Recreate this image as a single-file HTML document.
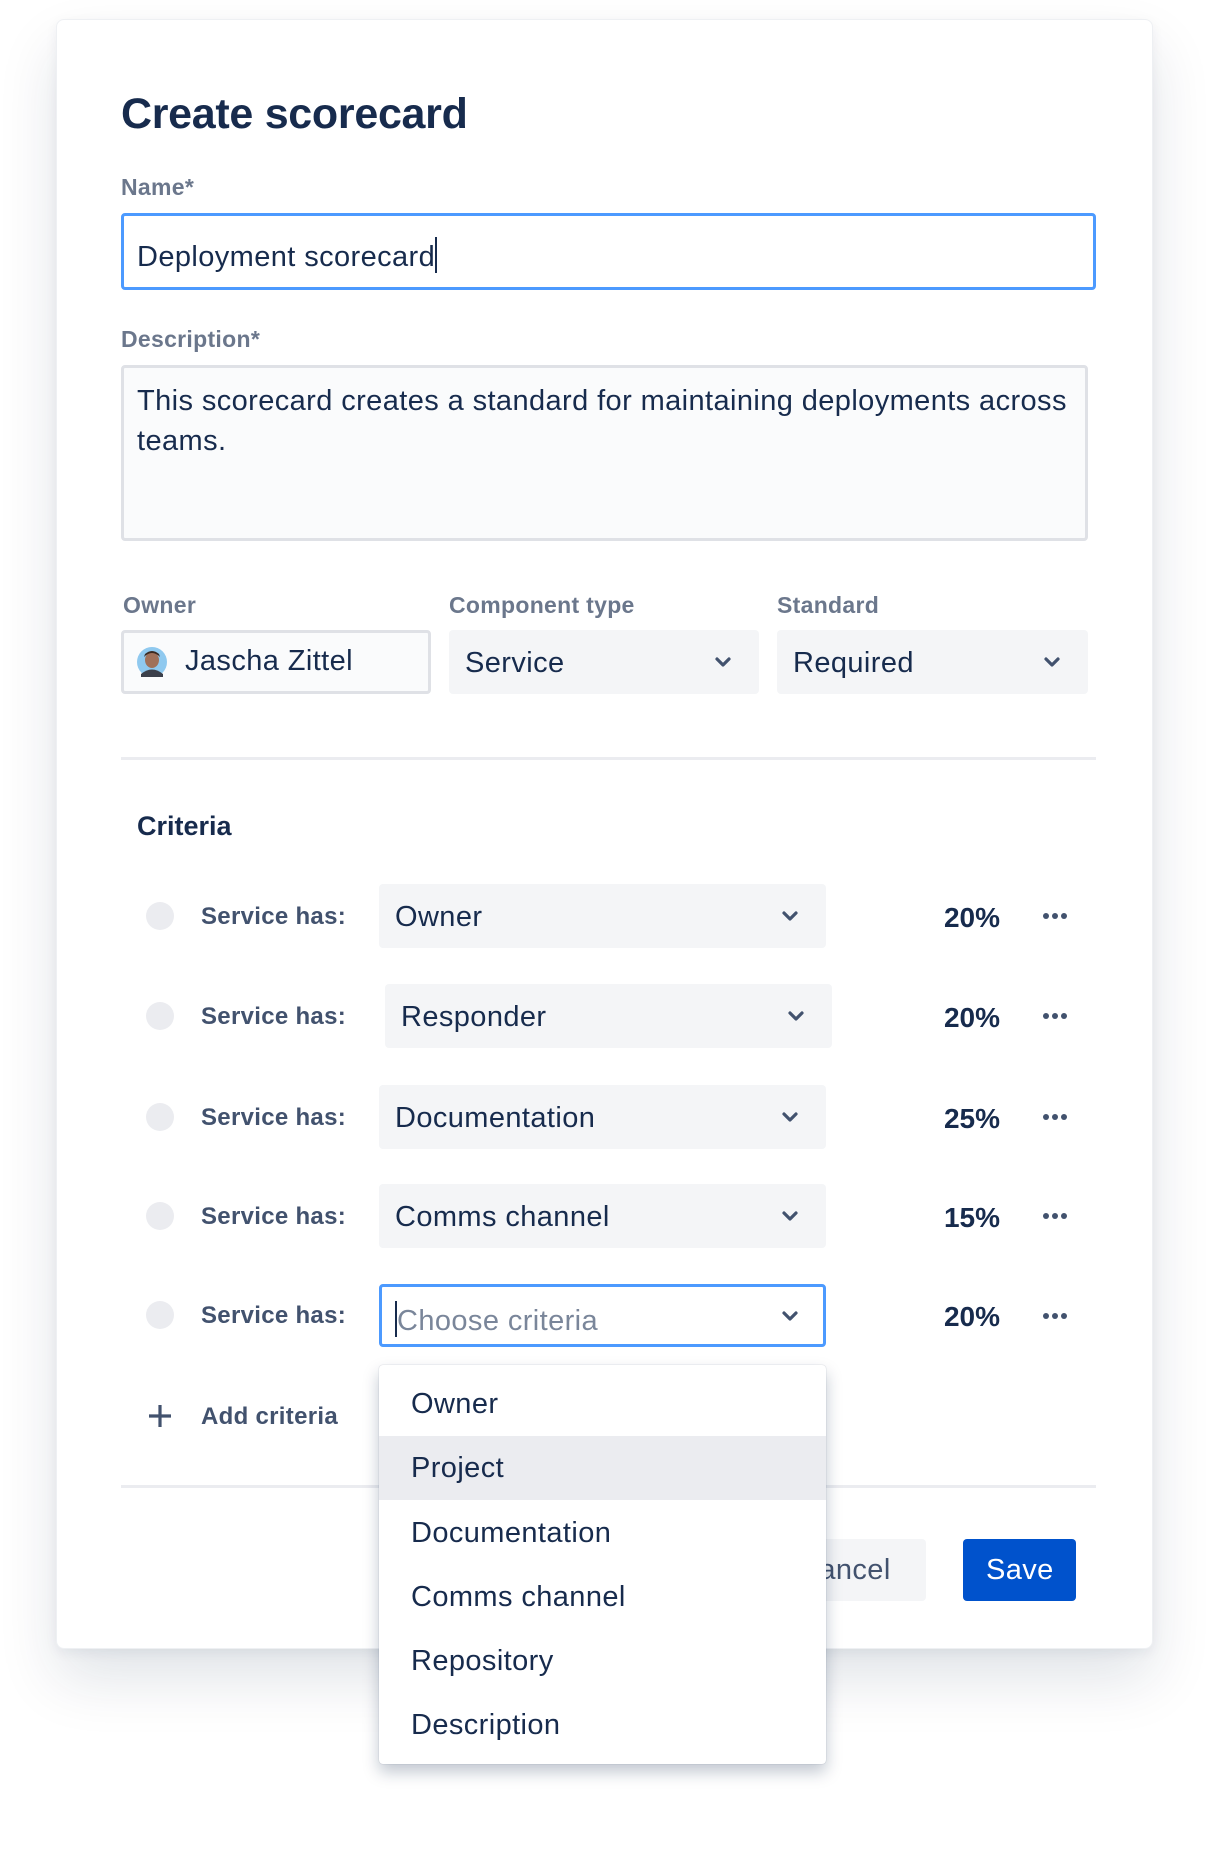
<!DOCTYPE html>
<html><head><meta charset="utf-8"><style>
*{box-sizing:border-box;margin:0;padding:0}
body{width:1208px;height:1856px;background:#fff;font-family:"Liberation Sans",sans-serif;position:relative;overflow:hidden;color:#172b4d}
.a{position:absolute}
.card{left:56px;top:19px;width:1097px;height:1630px;border-radius:8px;background:#fff;border:1px solid #eef0f3;box-shadow:0 30px 60px rgba(9,30,66,0.12),0 4px 12px rgba(9,30,66,0.06)}
.lbl{font-size:23px;color:#6b778c;font-weight:bold;line-height:1;letter-spacing:0.3px}
.fld{font-size:29px;line-height:1;letter-spacing:0.4px}
.sel{background:#f4f5f7;border-radius:4px;height:64px}
.sel span{position:absolute;left:16px;top:17px;font-size:29px;letter-spacing:0.4px}
.chev{position:absolute;right:26px;top:22px}
.sh{font-size:24px;font-weight:bold;color:#42526e;letter-spacing:0.3px}
.dot{width:28px;height:28px;border-radius:50%;background:#ebecf0}
.pct{font-size:28px;font-weight:bold;color:#172b4d;text-align:right;width:84px}
.item{left:0;width:447px;height:64px;font-size:29px;letter-spacing:0.4px;padding:16px 0 0 32px}
</style></head><body>
<div class="a card"></div>
<div class="a" style="left:121px;top:90px;font-size:43px;font-weight:bold;letter-spacing:-0.3px">Create scorecard</div>
<div class="a lbl" style="left:121px;top:176px">Name*</div>
<div class="a" style="left:121px;top:213px;width:975px;height:77px;border:3px solid #4c9aff;border-radius:4px"></div>
<div class="a fld" style="left:137px;top:237px">Deployment scorecard<span style="display:inline-block;width:2px;height:36px;background:#172b4d;vertical-align:-7px"></span></div>
<div class="a lbl" style="left:121px;top:328px">Description*</div>
<div class="a" style="left:121px;top:365px;width:967px;height:176px;border:3px solid #dfe1e6;border-radius:4px;background:#fafbfc"></div>
<div class="a fld" style="left:137px;top:381px;line-height:40px;width:940px">This scorecard creates a standard for maintaining deployments across teams.</div>
<div class="a lbl" style="left:123px;top:594px">Owner</div>
<div class="a lbl" style="left:449px;top:594px">Component type</div>
<div class="a lbl" style="left:777px;top:594px">Standard</div>
<div class="a" style="left:121px;top:630px;width:310px;height:64px;border:3px solid #dfe1e6;border-radius:4px;background:#fafbfc"></div>
<svg class="a" style="left:137px;top:647px" width="30" height="30" viewBox="0 0 30 30"><circle cx="15" cy="15" r="15" fill="#8fc9ef"/><ellipse cx="15" cy="13" rx="7" ry="8" fill="#a0715a"/><path d="M7 10Q15 2 23 10L22 7Q15 1 8 7Z" fill="#3a2a22"/><path d="M4 27Q15 18 26 27L26 30L4 30Z" fill="#3b3f4a"/></svg>
<div class="a fld" style="left:185px;top:647px">Jascha Zittel</div>
<div class="a sel" style="left:449px;top:630px;width:310px"><span>Service</span><svg class="chev" width="20" height="20" viewBox="0 0 20 20"><path d="M4 7l6 6 6-6" stroke="#42526e" stroke-width="3.2" fill="none" stroke-linecap="round" stroke-linejoin="round"/></svg></div>
<div class="a sel" style="left:777px;top:630px;width:311px"><span>Required</span><svg class="chev" width="20" height="20" viewBox="0 0 20 20"><path d="M4 7l6 6 6-6" stroke="#42526e" stroke-width="3.2" fill="none" stroke-linecap="round" stroke-linejoin="round"/></svg></div>
<div class="a" style="left:121px;top:757px;width:975px;height:3px;background:#ebecf0"></div>
<div class="a" style="left:137px;top:811px;font-size:27px;font-weight:bold">Criteria</div>

<div class="a dot" style="left:146px;top:902px"></div><div class="a sh" style="left:201px;top:903px">Service has:</div>
<div class="a sel" style="left:379px;top:884px;width:447px"><span>Owner</span><svg class="chev" width="20" height="20" viewBox="0 0 20 20"><path d="M4 7l6 6 6-6" stroke="#42526e" stroke-width="3.2" fill="none" stroke-linecap="round" stroke-linejoin="round"/></svg></div>
<div class="a pct" style="left:916px;top:902px">20%</div>

<div class="a dot" style="left:146px;top:1002px"></div><div class="a sh" style="left:201px;top:1003px">Service has:</div>
<div class="a sel" style="left:385px;top:984px;width:447px"><span>Responder</span><svg class="chev" width="20" height="20" viewBox="0 0 20 20"><path d="M4 7l6 6 6-6" stroke="#42526e" stroke-width="3.2" fill="none" stroke-linecap="round" stroke-linejoin="round"/></svg></div>
<div class="a pct" style="left:916px;top:1002px">20%</div>

<div class="a dot" style="left:146px;top:1103px"></div><div class="a sh" style="left:201px;top:1104px">Service has:</div>
<div class="a sel" style="left:379px;top:1085px;width:447px"><span>Documentation</span><svg class="chev" width="20" height="20" viewBox="0 0 20 20"><path d="M4 7l6 6 6-6" stroke="#42526e" stroke-width="3.2" fill="none" stroke-linecap="round" stroke-linejoin="round"/></svg></div>
<div class="a pct" style="left:916px;top:1103px">25%</div>

<div class="a dot" style="left:146px;top:1202px"></div><div class="a sh" style="left:201px;top:1203px">Service has:</div>
<div class="a sel" style="left:379px;top:1184px;width:447px"><span>Comms channel</span><svg class="chev" width="20" height="20" viewBox="0 0 20 20"><path d="M4 7l6 6 6-6" stroke="#42526e" stroke-width="3.2" fill="none" stroke-linecap="round" stroke-linejoin="round"/></svg></div>
<div class="a pct" style="left:916px;top:1202px">15%</div>

<div class="a dot" style="left:146px;top:1301px"></div><div class="a sh" style="left:201px;top:1302px">Service has:</div>
<div class="a" style="left:379px;top:1284px;width:447px;height:63px;border:3px solid #4c9aff;border-radius:4px;background:#fff"><span style="position:absolute;left:13px;top:14px;font-size:29px;letter-spacing:0.4px;color:#7a869a"><span style="display:inline-block;width:2px;height:36px;background:#172b4d;vertical-align:-7px"></span>Choose criteria</span><svg style="position:absolute;right:23px;top:19px" width="20" height="20" viewBox="0 0 20 20"><path d="M4 7l6 6 6-6" stroke="#42526e" stroke-width="3.2" fill="none" stroke-linecap="round" stroke-linejoin="round"/></svg></div>
<div class="a pct" style="left:916px;top:1301px">20%</div>

<svg class="a" style="left:1041px;top:909px" width="30" height="320" viewBox="0 0 30 320"><g fill="#42526e"><circle cx="5" cy="7" r="3"/><circle cx="14" cy="7" r="3"/><circle cx="23" cy="7" r="3"/><circle cx="5" cy="107" r="3"/><circle cx="14" cy="107" r="3"/><circle cx="23" cy="107" r="3"/><circle cx="5" cy="208" r="3"/><circle cx="14" cy="208" r="3"/><circle cx="23" cy="208" r="3"/><circle cx="5" cy="307" r="3"/><circle cx="14" cy="307" r="3"/><circle cx="23" cy="307" r="3"/></g></svg>
<svg class="a" style="left:1041px;top:1309px" width="30" height="14"><g fill="#42526e"><circle cx="5" cy="7" r="3"/><circle cx="14" cy="7" r="3"/><circle cx="23" cy="7" r="3"/></g></svg>

<svg class="a" style="left:147px;top:1403px" width="26" height="26" viewBox="0 0 26 26"><path d="M13 2v22M2 13h22" stroke="#42526e" stroke-width="3.2"/></svg>
<div class="a sh" style="left:201px;top:1403px">Add criteria</div>
<div class="a" style="left:121px;top:1485px;width:975px;height:3px;background:#ebecf0"></div>
<div class="a" style="left:780px;top:1539px;width:146px;height:62px;background:#f4f5f7;border-radius:4px;font-size:29px;letter-spacing:0.4px;padding:15px 0 0 18px;color:#42526e">Cancel</div>
<div class="a" style="left:963px;top:1539px;width:113px;height:62px;background:#0052cc;border-radius:4px;font-size:29px;letter-spacing:0.4px;color:#fff;padding:15px 0 0 23px">Save</div>

<div class="a" style="left:379px;top:1365px;width:447px;height:399px;background:#fff;border-radius:4px;box-shadow:0 8px 16px rgba(9,30,66,0.25),0 0 1px rgba(9,30,66,0.31);overflow:hidden">
<div class="a item" style="top:7px">Owner</div>
<div class="a item" style="top:71px;background:#ebecf0">Project</div>
<div class="a item" style="top:136px">Documentation</div>
<div class="a item" style="top:200px">Comms channel</div>
<div class="a item" style="top:264px">Repository</div>
<div class="a item" style="top:328px">Description</div>
</div>
</body></html>
